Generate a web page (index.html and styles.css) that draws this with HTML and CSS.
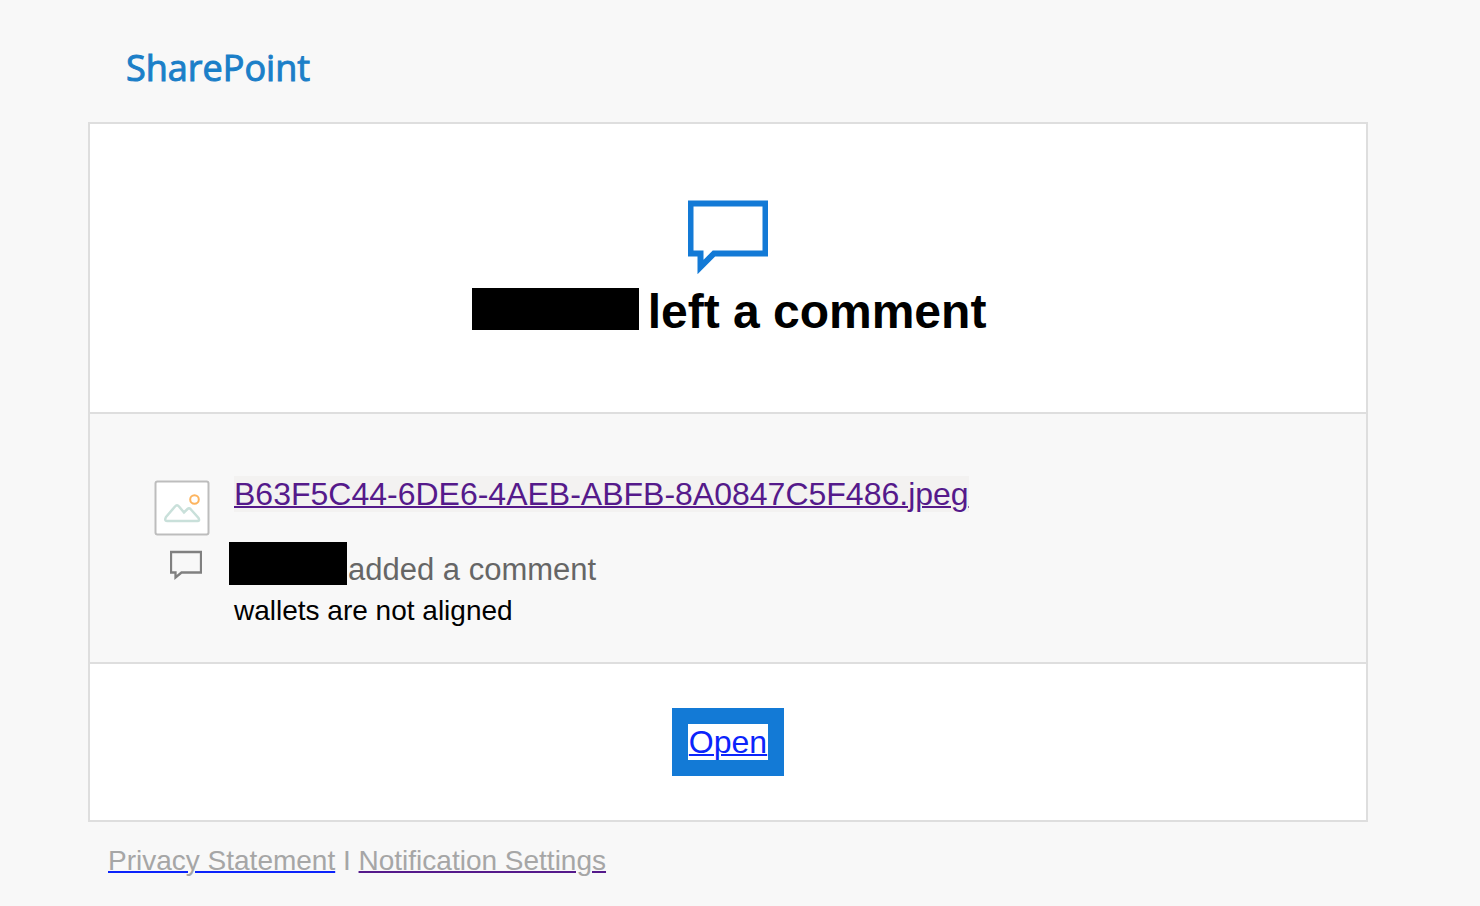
FILE: index.html
```html
<!DOCTYPE html>
<html lang="en">
<head>
<meta charset="utf-8">
<title>SharePoint comment notification</title>
<link rel="stylesheet" href="styles.css">
</head>
<body>
<div class="page">
  <header class="brand">SharePoint</header>
  <main class="card">
    <section class="hero">
      <svg class="hero-icon" viewBox="0 0 80 76" aria-hidden="true">
        <path d="M2.500 3.500H77.500V53.500H26L12.500 67V53.500H2.500Z" fill="none" stroke="#137ad6" stroke-width="6"/>
      </svg>
      <h1 class="hero-title"><span class="redacted redacted-large"></span>left a comment</h1>
    </section>
    <section class="activity">
      <svg class="thumb" viewBox="0 0 56 56" aria-hidden="true">
        <rect x="1.500" y="1.500" width="53" height="53" rx="2" fill="#fff" stroke="#bdbdbd" stroke-width="2"/>
        <circle cx="40.500" cy="19.500" r="4.300" fill="none" stroke="#fdb45e" stroke-width="2"/>
        <path d="M12 37L21 26.500Q23 24 25 26.500L30 32.500L33.500 29Q35 27.500 36.500 29L44.500 38Q46 41 43.500 41H13Q10 41 12 37Z" fill="none" stroke="#c9e0da" stroke-width="2.500"/>
      </svg>
      <div class="file"><a class="file-link" href="#file">B63F5C44-6DE6-4AEB-ABFB-8A0847C5F486.jpeg</a></div>
      <svg class="note-icon" viewBox="0 0 32 30" aria-hidden="true">
        <path d="M1 2H31V22.500H11.500L5.500 27.500V22.500H1Z" fill="none" stroke="#808080" stroke-width="2.300"/>
      </svg>
      <div class="note">
        <p class="note-author"><span class="redacted redacted-small"></span>added a comment</p>
        <p class="note-text">wallets are not aligned</p>
      </div>
    </section>
    <section class="actions">
      <div class="open-box"><a class="open-link" href="#open">Open</a></div>
    </section>
  </main>
  <footer class="footer"><a class="privacy" href="#privacy">Privacy Statement</a> I <a class="settings" href="#settings">Notification Settings</a></footer>
</div>
</body>
</html>
```
FILE: styles.css
```css
* {
  box-sizing: border-box;
}

body {
  margin: 0;
  background: #f8f8f8;
  color: #000;
  font-family: "Liberation Sans", Arial, Helvetica, sans-serif;
}

h1,
p {
  margin: 0;
}

a {
  text-decoration-thickness: 2px;
}

.page {
  padding: 44px 112px 28px 88px;
}

.brand {
  padding: 0 38px 30px;
  color: #1b7fc8;
  font: 36px/48px "Open Sans", "Noto Sans", sans-serif;
  -webkit-text-stroke: 1px #1b7fc8;
}

.card {
  border: 2px solid #dedede;
  background: #fff;
}

.hero {
  display: flex;
  flex-direction: column;
  align-items: center;
  padding: 76px 24px 72px;
}

.hero-icon {
  width: 80px;
  height: 76px;
}

.hero-title {
  display: flex;
  align-items: center;
  gap: 9px;
  padding: 8px 0 0 2px;
  font-size: 48px;
  line-height: 56px;
}

.redacted {
  flex: none;
  background: #000;
}

.redacted-large {
  width: 167px;
  height: 42px;
  margin-bottom: 6px;
}

.activity {
  display: grid;
  grid-template-columns: 56px minmax(0, 1fr);
  column-gap: 24px;
  padding: 62px 64px 30px;
  border-top: 2px solid #dedede;
  border-bottom: 2px solid #dedede;
  background: #f8f8f8;
}

.thumb {
  width: 56px;
  height: 56px;
  margin-top: 4px;
}

.file {
  font-size: 32px;
  line-height: 36px;
}

.file-link {
  background: #f3f2f1;
  color: #551a8b;
}

.note-icon {
  justify-self: center;
  width: 32px;
  height: 30px;
  margin: 14px 0 0 8px;
}

.note {
  padding-top: 5px;
}

.note-author {
  display: flex;
  gap: 1px;
  margin-left: -5px;
  color: #666;
  font-size: 31px;
  line-height: 58px;
}

.redacted-small {
  width: 118px;
  height: 43px;
  margin-top: 1px;
}

.note-text {
  margin-top: -8px;
  padding-bottom: 1px;
  font-size: 28px;
  line-height: 40px;
}

.actions {
  display: flex;
  justify-content: center;
  padding: 44px;
}

.open-box {
  display: flex;
  border: 16px solid #137ad6;
}

.open-link {
  padding: 0 1px;
  background: #fff;
  color: #0b24fb;
  font-size: 32px;
  line-height: 36px;
}

.footer {
  padding: 22px 20px 0;
  color: #a6a6a6;
  font-size: 28px;
  line-height: 34px;
}

.footer a {
  color: inherit;
}

.privacy {
  text-decoration-color: #0b24fb;
}

.settings {
  text-decoration-color: #551a8b;
}
```
